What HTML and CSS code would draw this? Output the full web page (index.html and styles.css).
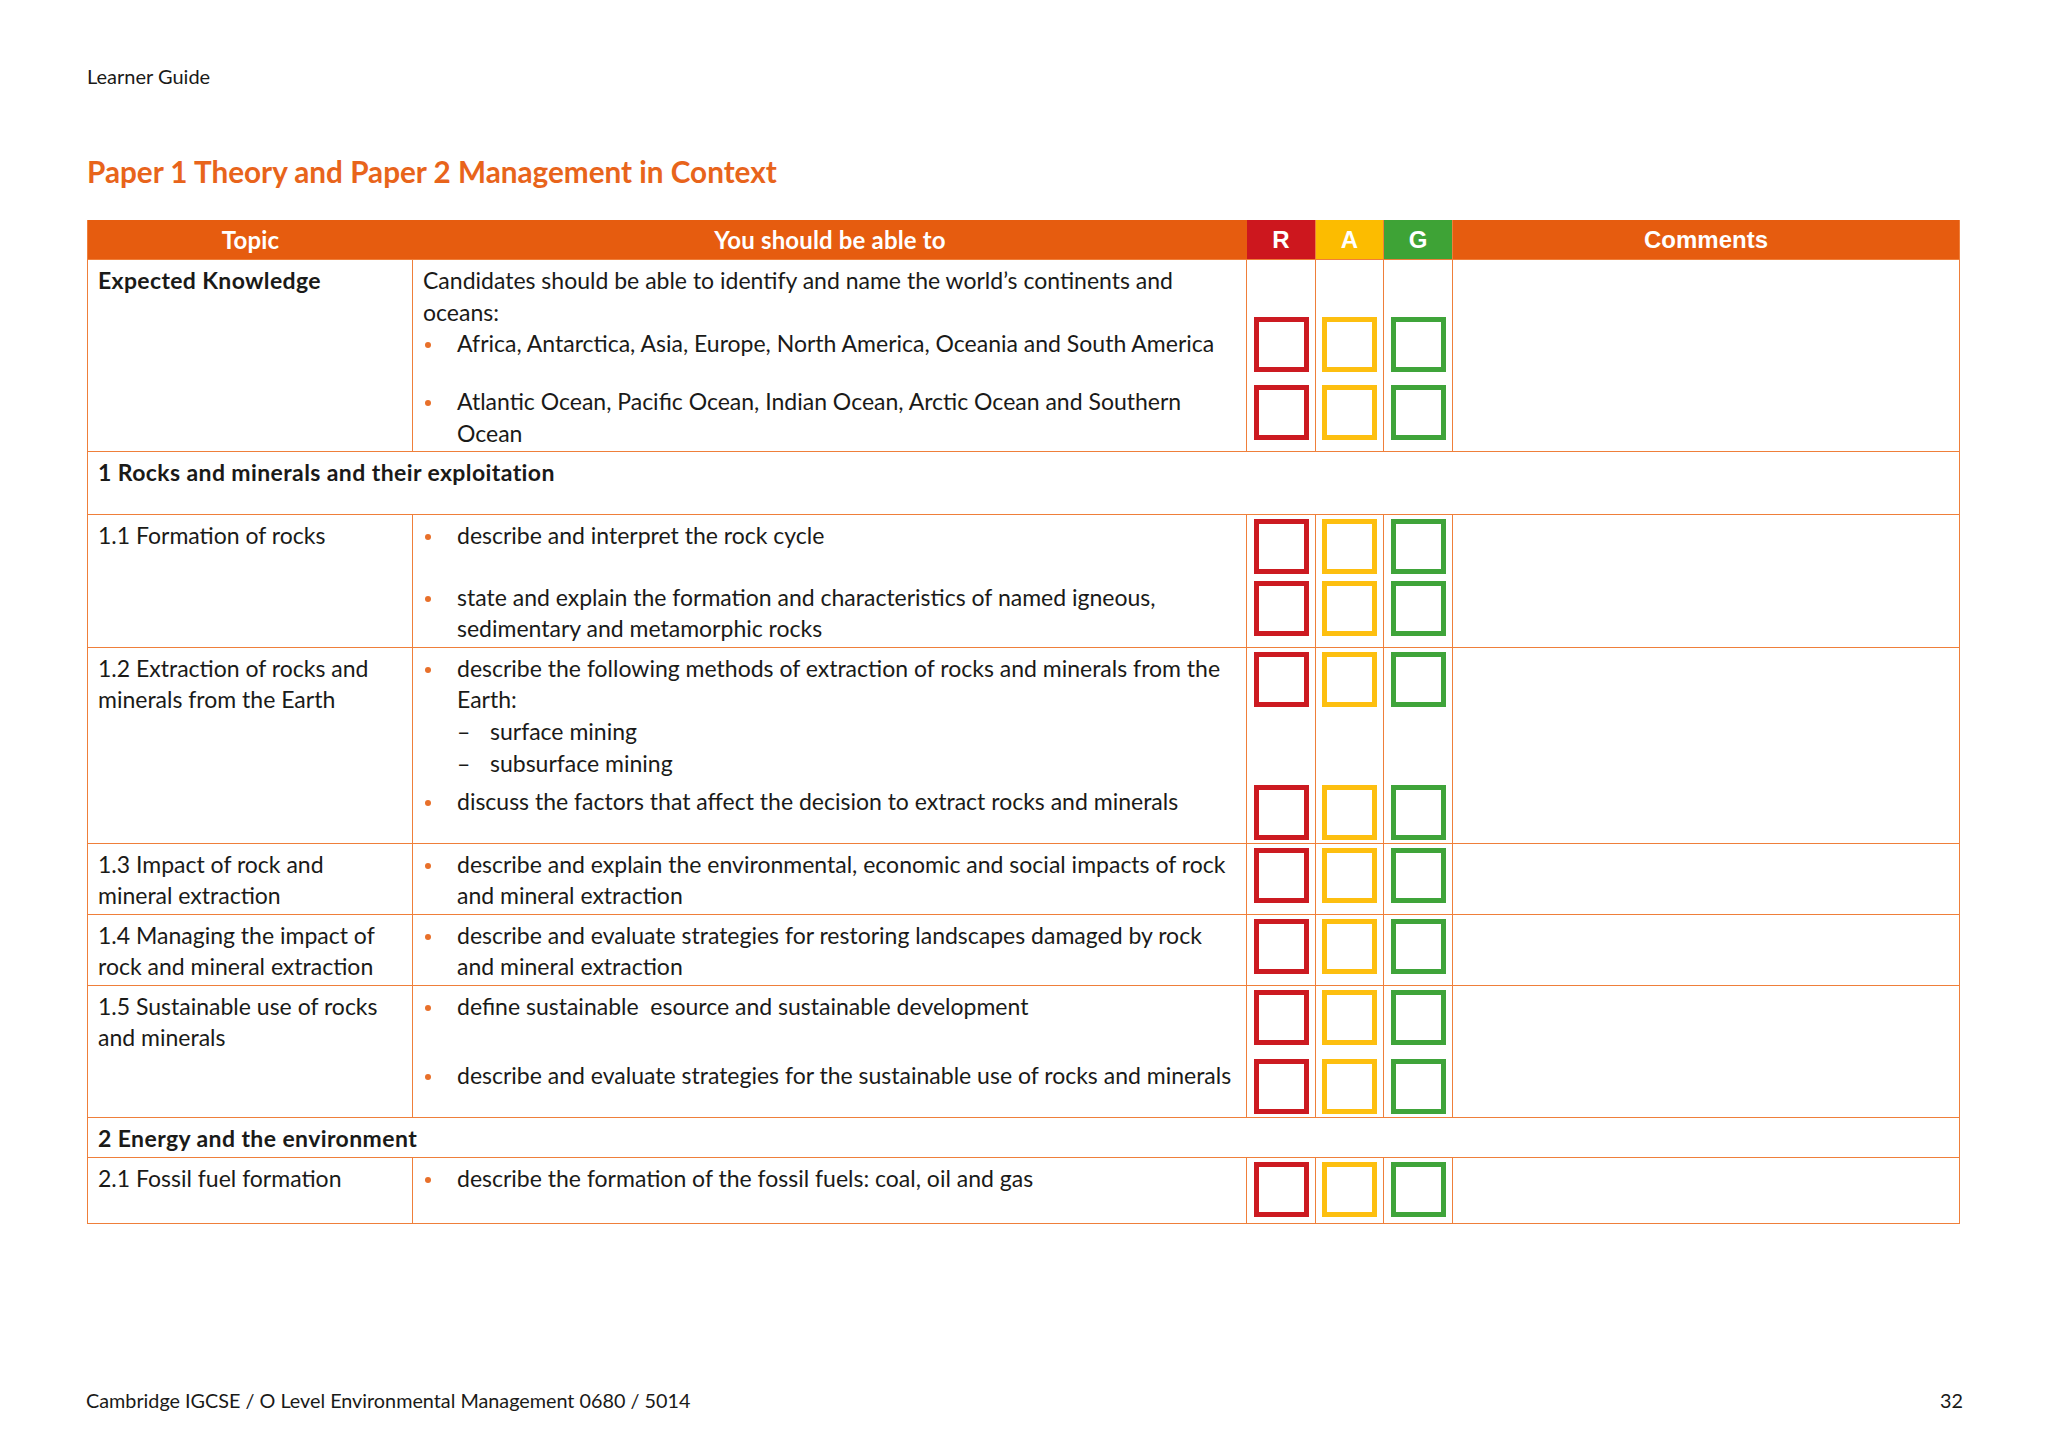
FILE: index.html
```html
<!DOCTYPE html>
<html lang="en">
<head>
<meta charset="utf-8">
<title>Learner Guide</title>
<link rel="stylesheet" href="styles.css">
</head>
<body>
<div class="page">
  <div class="running">Learner Guide</div>
  <h1 class="title">Paper 1 Theory and Paper 2 Management in Context</h1>

  <div class="table">
    <div class="row head">
      <div class="hc">Topic</div>
      <div class="hc">You should be able to</div>
      <div class="hc rag-h bg-r">R</div>
      <div class="hc rag-h bg-a">A</div>
      <div class="hc rag-h bg-g">G</div>
      <div class="hc rag-h comments-h">Comments</div>
    </div>

    <div class="row">
      <div class="topic span2 strong">Expected Knowledge</div>
      <div class="item pb22">
        <p class="intro">Candidates should be able to identify and name the world’s continents and<br>oceans:</p>
        <div class="bl"><span class="dot"></span><div>Africa, Antarctica, Asia, Europe, North America, Oceania and South America</div></div>
      </div>
      <div class="rag low"><span class="box r"></span></div>
      <div class="rag low"><span class="box a"></span></div>
      <div class="rag low"><span class="box g"></span></div>
      <div class="comments span2"></div>
      <div class="item">
        <div class="bl"><span class="dot"></span><div>Atlantic Ocean, Pacific Ocean, Indian Ocean, Arctic Ocean and Southern<br>Ocean</div></div>
      </div>
      <div class="rag"><span class="box r"></span></div>
      <div class="rag"><span class="box a"></span></div>
      <div class="rag"><span class="box g"></span></div>
    </div>

    <div class="row">
      <div class="sec tall">1 Rocks and minerals and their exploitation</div>
    </div>

    <div class="row">
      <div class="topic span2">1.1 Formation of rocks</div>
      <div class="item">
        <div class="bl"><span class="dot"></span><div>describe and interpret the rock cycle</div></div>
      </div>
      <div class="rag"><span class="box r"></span></div>
      <div class="rag"><span class="box a"></span></div>
      <div class="rag"><span class="box g"></span></div>
      <div class="comments span2"></div>
      <div class="item">
        <div class="bl"><span class="dot"></span><div>state and explain the formation and characteristics of named igneous,<br>sedimentary and metamorphic rocks</div></div>
      </div>
      <div class="rag"><span class="box r"></span></div>
      <div class="rag"><span class="box a"></span></div>
      <div class="rag"><span class="box g"></span></div>
    </div>

    <div class="row">
      <div class="topic span2">1.2 Extraction of rocks and<br>minerals from the Earth</div>
      <div class="item">
        <div class="bl"><span class="dot"></span><div>describe the following methods of extraction of rocks and minerals from the<br>Earth:
          <div class="sub"><span class="dash">–</span><span>surface mining</span></div>
          <div class="sub"><span class="dash">–</span><span>subsurface mining</span></div>
        </div></div>
      </div>
      <div class="rag"><span class="box r"></span></div>
      <div class="rag"><span class="box a"></span></div>
      <div class="rag"><span class="box g"></span></div>
      <div class="comments span2"></div>
      <div class="item">
        <div class="bl"><span class="dot"></span><div>discuss the factors that affect the decision to extract rocks and minerals</div></div>
      </div>
      <div class="rag"><span class="box r"></span></div>
      <div class="rag"><span class="box a"></span></div>
      <div class="rag"><span class="box g"></span></div>
    </div>

    <div class="row">
      <div class="topic">1.3 Impact of rock and<br>mineral extraction</div>
      <div class="item">
        <div class="bl"><span class="dot"></span><div>describe and explain the environmental, economic and social impacts of rock<br>and mineral extraction</div></div>
      </div>
      <div class="rag"><span class="box r"></span></div>
      <div class="rag"><span class="box a"></span></div>
      <div class="rag"><span class="box g"></span></div>
      <div class="comments"></div>
    </div>

    <div class="row">
      <div class="topic">1.4 Managing the impact of<br>rock and mineral extraction</div>
      <div class="item">
        <div class="bl"><span class="dot"></span><div>describe and evaluate strategies for restoring landscapes damaged by rock<br>and mineral extraction</div></div>
      </div>
      <div class="rag"><span class="box r"></span></div>
      <div class="rag"><span class="box a"></span></div>
      <div class="rag"><span class="box g"></span></div>
      <div class="comments"></div>
    </div>

    <div class="row">
      <div class="topic span2">1.5 Sustainable use of rocks<br>and minerals</div>
      <div class="item pb34">
        <div class="bl"><span class="dot"></span><div>define sustainable &nbsp;esource and sustainable development</div></div>
      </div>
      <div class="rag"><span class="box r"></span></div>
      <div class="rag"><span class="box a"></span></div>
      <div class="rag"><span class="box g"></span></div>
      <div class="comments span2"></div>
      <div class="item">
        <div class="bl"><span class="dot"></span><div>describe and evaluate strategies for the sustainable use of rocks and minerals</div></div>
      </div>
      <div class="rag"><span class="box r"></span></div>
      <div class="rag"><span class="box a"></span></div>
      <div class="rag"><span class="box g"></span></div>
    </div>

    <div class="row">
      <div class="sec">2 Energy and the environment</div>
    </div>

    <div class="row">
      <div class="topic">2.1 Fossil fuel formation</div>
      <div class="item pb28">
        <div class="bl"><span class="dot"></span><div>describe the formation of the fossil fuels: coal, oil and gas</div></div>
      </div>
      <div class="rag"><span class="box r"></span></div>
      <div class="rag"><span class="box a"></span></div>
      <div class="rag"><span class="box g"></span></div>
      <div class="comments"></div>
    </div>
  </div>

  <div class="footer">
    <span>Cambridge IGCSE / O Level Environmental Management 0680 / 5014</span>
    <span>32</span>
  </div>
</div>
</body>
</html>
```

FILE: styles.css
```css
* {
  box-sizing: border-box;
}

html,
body {
  margin: 0;
  padding: 0;
  background: #ffffff;
}

body {
  font-family: Lato, "Noto Sans", "DejaVu Sans", sans-serif;
  color: #1a1a18;
}

.page {
  width: 2048px;
  height: 1448px;
  padding: 62px 88px 34px 87px;
  display: flex;
  flex-direction: column;
}

.running {
  font-size: 20px;
  line-height: 28px;
}

.title {
  margin: 62px 0 28px;
  font-size: 29.7px;
  line-height: 40px;
  font-weight: 700;
  color: #e8641b;
}

.table {
  width: 1873px;
  border-left: 1px solid #ef7f3a;
  border-right: 1px solid #ef7f3a;
}

.row {
  display: grid;
  grid-template-columns: 325px 834px 69px 68px 69px 1fr;
  border-bottom: 1px solid #ef7f3a;
  font-size: 23px;
  line-height: 31.6px;
}

.head {
  background: #e65c0f;
  color: #ffffff;
  height: 40px;
}

.hc {
  display: flex;
  align-items: center;
  justify-content: center;
  font-weight: 700;
  font-size: 24px;
  letter-spacing: 0.15px;
  line-height: 39px;
}

.rag-h {
  font-family: "Liberation Sans", Arial, sans-serif;
  font-size: 24px;
  letter-spacing: 0;
}

.bg-r,
.bg-a,
.bg-g {
  border-right: 1px solid #ef7f3a;
}

.bg-r {
  background: #cd171e;
}

.bg-a {
  background: #fcbc00;
}

.bg-g {
  background: #3ea336;
}

.topic,
.item,
.rag {
  border-right: 1px solid #ef7f3a;
}

.topic {
  grid-column: 1;
  padding: 5px 10px 1.75px;
}

.strong {
  font-weight: 700;
  letter-spacing: 0.35px;
}

.item {
  grid-column: 2;
  padding: 5px 4px 1.75px 10px;
  white-space: nowrap;
}

.intro {
  margin: 0;
}

.bl {
  display: flex;
  align-items: flex-start;
}

.dot {
  flex: none;
  width: 6px;
  height: 6px;
  margin: 14px 26px 0 2px;
  border-radius: 50%;
  background: #e8702a;
}

.sub {
  display: flex;
}

.dash {
  flex: none;
  width: 33px;
}

.rag {
  padding: 4px 0 3px;
  display: flex;
  justify-content: center;
  align-items: flex-start;
}

.rag.low {
  padding-top: 57px;
}

.box {
  display: block;
  width: 55px;
  height: 55px;
  border: 5px solid;
}

.box.r {
  border-color: #cc1a21;
}

.box.a {
  border-color: #fdbf10;
}

.box.g {
  border-color: #3fa43a;
}

.comments {
  grid-column: 6;
}

.span2 {
  grid-row: span 2;
}

.sec {
  grid-column: 1 / -1;
  padding: 5px 10px 2px;
  font-weight: 700;
  letter-spacing: 0.4px;
}

.sec.tall {
  padding-bottom: 25px;
}

.pb22 {
  padding-bottom: 21.5px;
}

.pb28 {
  padding-bottom: 28px;
}

.pb34 {
  padding-bottom: 33px;
}

.footer {
  margin-top: auto;
  margin-left: -1px;
  margin-right: -3px;
  display: flex;
  justify-content: space-between;
  font-size: 19.8px;
  line-height: 28px;
}
```
